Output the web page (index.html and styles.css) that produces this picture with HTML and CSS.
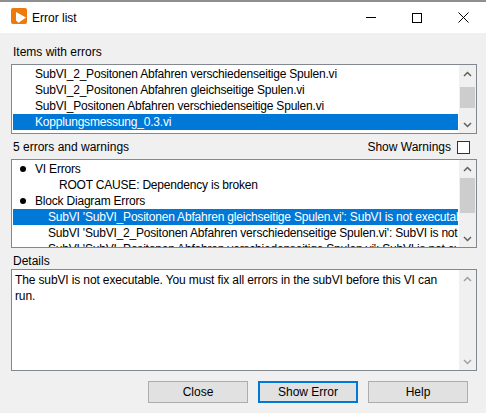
FILE: index.html
```html
<!DOCTYPE html>
<html lang="en">
  <head>
    <meta charset="UTF-8" />
    <meta name="viewport" content="width=device-width, initial-scale=1.0" />
    <title>Error list</title>
    <link rel="stylesheet" href="styles.css">
  </head>
  <body>
    <div class="backdrop"></div>
    <div class="window">
      <!-- Title bar -->
      <div class="titlebar">
        <svg class="app-icon" width="16" height="16" viewBox="0 0 16 16">
          <rect width="16" height="16" rx="2" fill="#ec7a0d" />
          <polygon points="5,4 15,9.4 7.5,14.8 5,12.6" fill="#ffffff" />
        </svg>
        <span class="title">Error list</span>
        <div class="controls">
          <div class="ctrl"><span class="ctrl-min"></span></div>
          <div class="ctrl"><span class="ctrl-max"></span></div>
          <div class="ctrl">
            <svg width="11" height="11" viewBox="0 0 11 11">
              <path d="M0.5 0.5 L10.5 10.5 M10.5 0.5 L0.5 10.5" stroke="#000" stroke-width="1" fill="none" />
            </svg>
          </div>
        </div>
      </div>

      <div class="content">
        <!-- Items with errors -->
        <div class="label">Items with errors</div>
        <div class="listbox items-box">
          <div class="list-items">
            <div class="row plain">SubVI_2_Positonen Abfahren verschiedenseitige Spulen.vi</div>
            <div class="row plain">SubVI_2_Positonen Abfahren gleichseitige Spulen.vi</div>
            <div class="row plain">SubVI_Positonen Abfahren verschiedenseitige Spulen.vi</div>
            <div class="row plain selected">Kopplungsmessung_0.3.vi</div>
          </div>
          <div class="scrollbar">
            <div class="arrow">
              <svg width="9" height="6" viewBox="0 0 9 6"><polyline points="1,5 4.5,1.5 8,5" /></svg>
            </div>
            <div class="track">
              <div class="thumb thumb-1"></div>
            </div>
            <div class="arrow">
              <svg width="9" height="6" viewBox="0 0 9 6"><polyline points="1,1 4.5,4.5 8,1" /></svg>
            </div>
          </div>
        </div>

        <!-- Errors and warnings -->
        <div class="label label-row">
          <span>5 errors and warnings</span>
          <span class="show-warn">Show Warnings <span class="checkbox"></span></span>
        </div>
        <div class="listbox errors-box">
          <div class="list-items">
            <div class="row group"><span class="bullet"></span>VI Errors</div>
            <div class="row root">ROOT CAUSE: Dependency is broken</div>
            <div class="row group"><span class="bullet"></span>Block Diagram Errors</div>
            <div class="row item selected">SubVI 'SubVI_Positonen Abfahren gleichseitige Spulen.vi': SubVI is not executable.</div>
            <div class="row item">SubVI 'SubVI_2_Positonen Abfahren verschiedenseitige Spulen.vi': SubVI is not executable.</div>
            <div class="row item">SubVI 'SubVI_Positonen Abfahren verschiedenseitige Spulen.vi': SubVI is not executable.</div>
          </div>
          <div class="scrollbar">
            <div class="arrow">
              <svg width="9" height="6" viewBox="0 0 9 6"><polyline points="1,5 4.5,1.5 8,5" /></svg>
            </div>
            <div class="track">
              <div class="thumb thumb-2"></div>
            </div>
            <div class="arrow">
              <svg width="9" height="6" viewBox="0 0 9 6"><polyline points="1,1 4.5,4.5 8,1" /></svg>
            </div>
          </div>
        </div>

        <!-- Details -->
        <div class="label label-details">Details</div>
        <div class="listbox details-box">
          <div class="details-text">The subVI is not executable. You must fix all errors in the subVI before this VI can run.</div>
          <div class="scrollbar disabled">
            <div class="arrow">
              <svg width="9" height="6" viewBox="0 0 9 6"><polyline points="1,5 4.5,1.5 8,5" /></svg>
            </div>
            <div class="track"></div>
            <div class="arrow">
              <svg width="9" height="6" viewBox="0 0 9 6"><polyline points="1,1 4.5,4.5 8,1" /></svg>
            </div>
          </div>
        </div>

        <!-- Buttons -->
        <div class="buttons">
          <button class="btn">Close</button>
          <button class="btn btn-default">Show Error</button>
          <button class="btn">Help</button>
        </div>
      </div>
    </div>
  </body>
</html>
```

FILE: styles.css
```css
/* Reset */
* {
  margin: 0;
  padding: 0;
  box-sizing: border-box;
}

body {
  width: 486px;
  height: 413px;
  overflow: hidden;
  background: #f0f0f0;
  font-family: "Liberation Sans", Arial, sans-serif;
  font-size: 12px;
  line-height: 16px;
  color: #000;
}

/* strip of the desktop above the window */
.backdrop {
  height: 2px;
  background: #8e8e8e;
}

/* Title bar */
.titlebar {
  height: 31px;
  background: #ffffff;
  display: flex;
  align-items: center;
}

.app-icon {
  margin-left: 11px;
  margin-bottom: 3px;
  flex-shrink: 0;
}

.title {
  margin-left: 5px;
}

.controls {
  margin-left: auto;
  display: flex;
  height: 31px;
}

.ctrl {
  width: 46px;
  height: 31px;
  display: flex;
  align-items: center;
  justify-content: center;
}

.ctrl-min {
  width: 10px;
  height: 1px;
  background: #000;
}

.ctrl-max {
  width: 10px;
  height: 10px;
  border: 1px solid #000;
}

/* Dialog body */
.content {
  padding: 11px 9px 0 11px;
}

.label {
  height: 16px;
  margin-bottom: 4px;
  padding-left: 2px;
}

.label-row {
  margin-top: 5px;
  display: flex;
  justify-content: space-between;
  align-items: center;
}

.show-warn {
  display: flex;
  align-items: center;
  padding-right: 7px;
}

.checkbox {
  width: 13px;
  height: 13px;
  margin-left: 6px;
  border: 1px solid #333;
  background: #fff;
}

.label-details {
  margin-top: 5px;
  margin-bottom: 0;
}

/* List boxes */
.listbox {
  display: flex;
  border: 1px solid #828790;
  background: #fff;
}

.items-box {
  height: 70px;
}

.errors-box {
  height: 89px;
}

.details-box {
  height: 102px;
}

.list-items {
  flex: 1;
  min-width: 0;
  overflow: hidden;
  padding: 1px 1px 0 1px;
}

.row {
  height: 16px;
  white-space: nowrap;
  overflow: hidden;
  display: flex;
  align-items: center;
  letter-spacing: -0.2px;
}

.row.plain {
  padding-left: 22px;
}

.row.group {
  padding-left: 7px;
}

.row.root {
  padding-left: 46px;
}

.row.item {
  padding-left: 35px;
}

.row.selected {
  background: #0078d7;
  color: #fff;
}

.bullet {
  width: 6px;
  height: 6px;
  border-radius: 50%;
  background: #000;
  margin-right: 9px;
  flex-shrink: 0;
}

.details-text {
  flex: 1;
  padding: 2px 4px 0 3px;
  letter-spacing: -0.13px;
}

/* Scroll bars */
.scrollbar {
  width: 17px;
  flex-shrink: 0;
  background: #f0f0f0;
  display: flex;
  flex-direction: column;
}

.arrow {
  height: 17px;
  display: flex;
  align-items: center;
  justify-content: center;
}

.arrow svg polyline {
  fill: none;
  stroke: #606060;
  stroke-width: 1.5;
}

.scrollbar.disabled .arrow svg polyline {
  stroke: #a0a0a0;
}

.track {
  flex: 1;
  padding: 0 1px;
}

.thumb {
  background: #cdcdcd;
}

.thumb-1 {
  margin-top: 5px;
  height: 21px;
}

.thumb-2 {
  margin-top: 1px;
  height: 35px;
}

/* Buttons */
.buttons {
  margin-top: 10px;
  display: flex;
  justify-content: flex-end;
  gap: 10px;
  padding-right: 9px;
}

.btn {
  width: 100px;
  height: 22px;
  background: #e1e1e1;
  border: 1px solid #adadad;
  font-family: "Liberation Sans", Arial, sans-serif;
  font-size: 12px;
  color: #000;
}

.btn-default {
  border: 2px solid #0078d7;
}
```
